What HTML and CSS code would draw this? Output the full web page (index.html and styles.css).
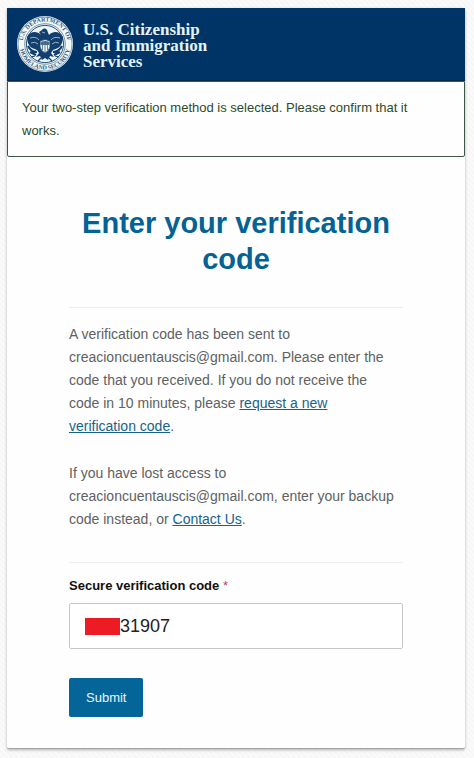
FILE: index.html
```html
<!DOCTYPE html>
<html lang="en">
<head>
<meta charset="utf-8">
<meta name="viewport" content="width=device-width, initial-scale=1">
<title>Enter your verification code</title>
<link rel="stylesheet" href="styles.css">
</head>
<body>
<div class="page">
  <header class="banner">
    <svg class="seal" viewBox="0 0 58 58" aria-hidden="true">
      <defs>
        <path id="arc-top" d="M7.2 34 A22.4 22.4 0 1 1 50.8 34"/>
        <path id="arc-bottom" d="M3.8 33 A25.5 25.5 0 0 0 54.2 33"/>
      </defs>
      <circle cx="29" cy="29" r="28" fill="#f3f8f8"/>
      <circle cx="29" cy="29" r="27" fill="none" stroke="#3b6384" stroke-width=".6"/>
      <circle cx="29" cy="29" r="20.3" fill="#e9f2f4" stroke="#466c8a" stroke-width=".7"/>
      <circle cx="29" cy="29" r="18.6" fill="#edf5f6" stroke="#174471" stroke-width=".9"/>
      <text class="seal-text"><textPath href="#arc-top" startOffset="50%" text-anchor="middle">U.S. DEPARTMENT OF</textPath></text>
      <text class="seal-text"><textPath href="#arc-bottom" startOffset="50%" text-anchor="middle">HOMELAND SECURITY</textPath></text>
      <path fill="#123f6f" d="M25 20 C20 15 14 17 11 22 C11 27 13 31 16 33 L21 35 L23 38 L20 42 L24 41 L26 45 L29 43 L32 45 L34 41 L38 42 L35 38 L37 35 L42 33 C45 31 47 27 47 22 C44 17 38 15 33 20 L31 15 C30 13 27 13 26 15 L23 17 Z"/>
      <path fill="none" stroke="#b8d0dc" stroke-width=".8" d="M14 23 Q20 21 23 25 M15 28 Q19 26 22 29 M44 23 Q38 21 35 25 M43 28 Q39 26 36 29 M26 17 L29 18"/>
      <path fill="#e9f2f4" stroke="#123f6f" stroke-width=".8" d="M24 26 Q29 23 34 26 V32 Q33 36 29 38 Q25 36 24 32 Z"/>
      <path fill="#466c8a" d="M24.5 27 Q29 25 33.5 27 V30 H24.5 Z"/>
      <path stroke="#466c8a" stroke-width=".8" d="M26.5 30 V35 M29 30 V37 M31.5 30 V35"/>
      <path fill="none" stroke="#123f6f" stroke-width="2.2" d="M21 37 Q15 37 12 31 M37 37 Q43 37 46 31 M20 40 L14 37 M38 40 L44 37"/>
      <path fill="none" stroke="#123f6f" stroke-width="1.2" d="M19 41 L15 42 M39 41 L43 42 M25 43 L22 46 M33 43 L36 46"/>
    </svg>
    <div class="agency">U.S. Citizenship<br>and Immigration<br>Services</div>
  </header>
  <div class="notice" role="status">Your two-step verification method is selected. Please confirm that it works.</div>
  <main class="content">
    <h1 class="title">Enter your verification code</h1>
    <div class="message">
      <p class="copy">A verification code has been sent to creacioncuentauscis@gmail.com. Please enter the code that you received. If you do not receive the code in 10 minutes, please <a href="#">request a new verification code</a>.</p>
      <p class="copy">If you have lost access to creacioncuentauscis@gmail.com, enter your backup code instead, or <a href="#">Contact Us</a>.</p>
    </div>
    <form class="form">
      <label class="label" for="code">Secure verification code <span class="required">*</span></label>
      <div class="field">
        <span class="mask"></span>
        <input class="code" id="code" type="text" value="31907">
      </div>
      <button class="submit" type="submit">Submit</button>
    </form>
  </main>
</div>
</body>
</html>
```

FILE: styles.css
```css
* {
  box-sizing: border-box;
}

body {
  margin: 0;
  padding: 8px 9px 9px 7px;
  font-family: "Liberation Sans", Arial, sans-serif;
  font-size: 13px;
  color: #606163;
  background: repeating-linear-gradient(45deg, #f7f7f7 0 2px, #fafafa 2px 4px);
}

.page {
  background: #fefefe;
  border-bottom: 1px solid #a4a6a6;
  border-radius: 2px;
  box-shadow: 0 1px 3px rgba(0, 0, 0, 0.3);
}

.banner {
  display: flex;
  align-items: center;
  gap: 9px;
  padding: 7px 9px;
  background: #003366;
  border-bottom: 1px solid #06294a;
}

.seal {
  flex: none;
  width: 58px;
  height: 58px;
}

.seal-text {
  font-family: "Liberation Serif", serif;
  font-size: 6px;
  font-weight: bold;
  fill: #31597c;
}

.agency {
  padding-top: 3px;
  font-family: "Liberation Serif", serif;
  font-size: 17px;
  font-weight: bold;
  line-height: 16px;
  color: #e4f3f8;
}

.notice {
  padding: 14px 32px 14px 14px;
  line-height: 23px;
  color: #2c4a2c;
  border: 1px solid #3f5548;
  border-radius: 0 0 2px 2px;
}

.content {
  padding: 48px 62px 31px;
}

.title {
  margin: 0 0 30px;
  font-size: 29px;
  line-height: 36px;
  text-align: center;
  color: #046294;
}

.message {
  display: flex;
  flex-direction: column;
  gap: 24px;
  padding: 15px 7px 31px 0;
  border: 0 solid #ededed;
  border-width: 1px 0;
}

.copy {
  margin: 0;
  font-size: 14px;
  line-height: 23px;
}

.copy a {
  color: #17638c;
}

.form {
  display: flex;
  flex-direction: column;
  align-items: flex-start;
}

.label {
  margin: 12px 0 6px;
  font-weight: bold;
  line-height: 22px;
  color: #111;
}

.required {
  font-weight: normal;
  color: #c0405a;
}

.field {
  display: flex;
  align-items: center;
  width: 100%;
  height: 46px;
  padding: 0 15px;
  background: #fff;
  border: 1px solid #c6c6c6;
  border-radius: 2px;
}

.mask {
  flex: none;
  width: 35px;
  height: 17px;
  background: #ed1c24;
}

.code {
  flex: 1;
  min-width: 0;
  padding: 0;
  border: 0;
  outline: 0;
  background: transparent;
  font: inherit;
  font-size: 18px;
  color: #222;
}

.submit {
  margin-top: 29px;
  padding: 8px 17px;
  font: inherit;
  line-height: 23px;
  color: #e8f6fb;
  background: #046599;
  border: 0;
  border-radius: 2px;
}
```
